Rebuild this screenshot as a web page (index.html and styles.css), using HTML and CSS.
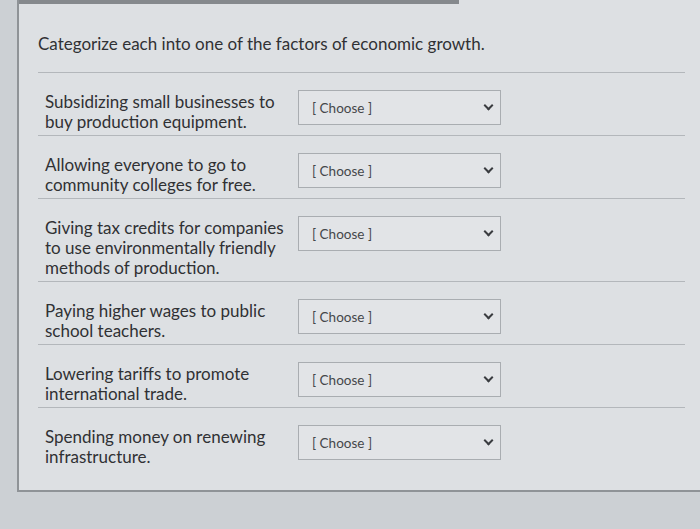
FILE: index.html
```html
<!doctype html>
<html lang="en-us">

<head>
    <title>Quiz | Question</title>
    <meta charset="utf-8" />
    <meta name="viewport" content="width=device-width, initial-scale=1.0" />
    <link rel="stylesheet" href="styles.css">
</head>

<body>
    <div class="question">
        <div class="topbar"></div>
        <p class="prompt">Categorize each into one of the factors of economic growth.</p>

        <div class="answers">
            <div class="row">
                <p class="item">Subsidizing small businesses to buy production equipment.</p>
                <div class="select"><span>[ Choose ]</span><i class="chev"></i></div>
            </div>
            <div class="row">
                <p class="item">Allowing everyone to go to community colleges for free.</p>
                <div class="select"><span>[ Choose ]</span><i class="chev"></i></div>
            </div>
            <div class="row">
                <p class="item">Giving tax credits for companies to use environmentally friendly methods of production.</p>
                <div class="select"><span>[ Choose ]</span><i class="chev"></i></div>
            </div>
            <div class="row">
                <p class="item">Paying higher wages to public school teachers.</p>
                <div class="select"><span>[ Choose ]</span><i class="chev"></i></div>
            </div>
            <div class="row">
                <p class="item">Lowering tariffs to promote international trade.</p>
                <div class="select"><span>[ Choose ]</span><i class="chev"></i></div>
            </div>
            <div class="row">
                <p class="item">Spending money on renewing infrastructure.</p>
                <div class="select"><span>[ Choose ]</span><i class="chev"></i></div>
            </div>
        </div>
    </div>
</body>

</html>
```

FILE: styles.css
```css
body {
    margin: 0;
    height: 529px;
    overflow: hidden;
    background-color: #ccd0d4;
    font-family: Lato, "Liberation Sans", sans-serif;
    color: #303134;
}

.question {
    margin-left: 17px;
    width: 683px;
    height: 492px;
    box-sizing: border-box;
    background-color: #dde0e3;
    border-left: 2px solid #8f9397;
    border-bottom: 2px solid #8f9397;
    padding: 0 0 0 19px;
}

.topbar {
    margin-left: -19px;
    width: 440px;
    height: 4px;
    background-color: #85898d;
}

.prompt {
    margin: 0;
    padding: 29px 0 17px 0;
    font-size: 17px;
    line-height: 22px;
    width: 647px;
    border-bottom: 1px solid #b3b7bb;
}

.answers {
    width: 647px;
}

.row {
    display: flex;
    align-items: flex-start;
    padding: 17px 0 3px 7px;
    border-bottom: 1px solid #b3b7bb;
}

.row:last-child {
    border-bottom: none;
}

.item {
    margin: 2px 0 0 0;
    width: 248px;
    font-size: 17px;
    line-height: 20px;
}

.select {
    margin-left: 5px;
    width: 203px;
    height: 35px;
    box-sizing: border-box;
    border: 1px solid #a9adb1;
    background-color: #e2e4e7;
    display: flex;
    align-items: center;
    justify-content: space-between;
    padding: 0 8px 0 13px;
    font-size: 13.5px;
    color: #45474a;
}

.chev {
    width: 5px;
    height: 5px;
    border-right: 2.5px solid #3a3c40;
    border-bottom: 2.5px solid #3a3c40;
    transform: rotate(45deg);
    margin-top: -4px;
}
```
